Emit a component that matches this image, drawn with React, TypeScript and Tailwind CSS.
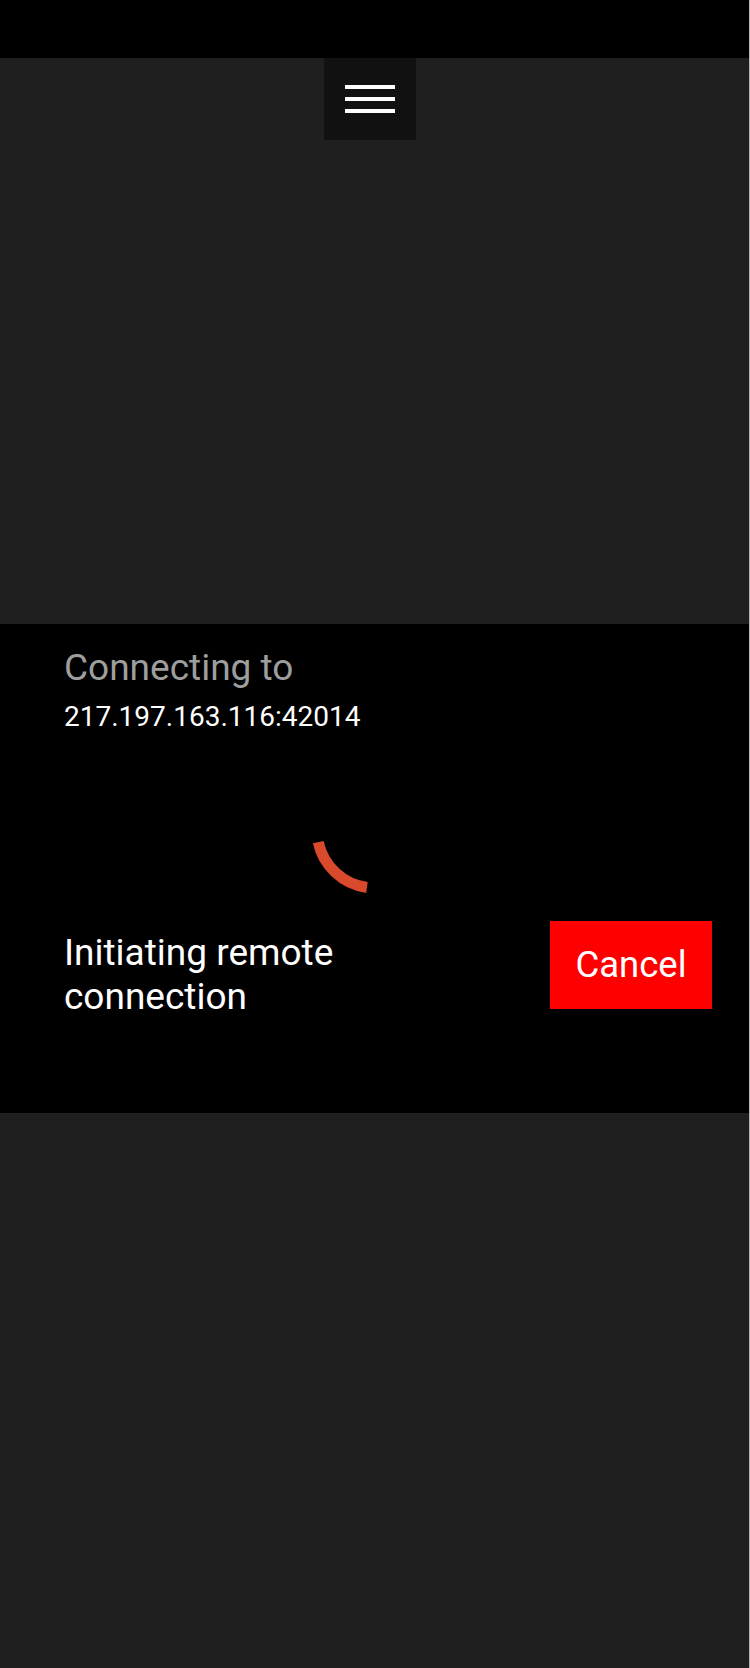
import React from "react";

function Spinner() {
  return (
    <svg width="140" height="140" viewBox="0 0 140 140" className="block">
      <path
        d="M 61.93 127.43 A 58 58 0 0 1 13.27 82.06"
        fill="none"
        stroke="#d84a2b"
        strokeWidth="11"
        strokeLinecap="butt"
      />
    </svg>
  );
}

export default function App() {
  return (
    <div className="flex min-h-[1668px] w-full bg-[#1f1f1f] font-['Roboto',sans-serif]">
      <div className="flex flex-1 flex-col">
        <div className="h-[58px] bg-black" />
        <div className="ml-[324px] flex h-[82px] w-[92px] flex-col items-center justify-center gap-[7.5px] bg-[#111111]">
          <div className="h-[4.5px] w-[50px] bg-white" />
          <div className="h-[4.5px] w-[50px] bg-white" />
          <div className="h-[4.5px] w-[50px] bg-white" />
        </div>
        <div className="mt-[484px] flex h-[489px] flex-col bg-black pl-[64px] pr-[37px] pt-[23px]">
          <div className="text-[37px] leading-[42px] text-[#9e9e9e]">Connecting to</div>
          <div className="mt-[12px] text-[28px] leading-[32px] text-white">217.197.163.116:42014</div>
          <div className="mt-[27px] -ml-[64px] -mr-[37px] flex justify-center">
            <Spinner />
          </div>
          <div className="mt-[21px] flex items-start justify-between">
            <div className="mt-[10px] w-[320px] text-[37px] leading-[44px] text-white">
              Initiating remote connection
            </div>
            <button className="flex h-[88px] w-[162px] items-center justify-center bg-[#ff0000] text-[36.5px] leading-[42px] text-white">
              Cancel
            </button>
          </div>
        </div>
        <div className="flex-1" />
      </div>
      <div className="w-px bg-[#b5b5b5]" />
    </div>
  );
}
